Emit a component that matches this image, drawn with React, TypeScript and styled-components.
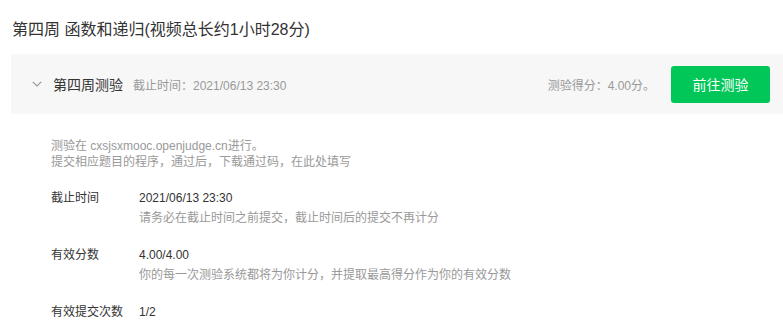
import React from "react";
import styled, { createGlobalStyle } from "styled-components";

const GlobalStyle = createGlobalStyle`
  html, body {
    margin: 0;
    padding: 0;
    background: #fff;
  }
  body {
    font-family: "Liberation Sans", Arial, "Noto Sans CJK SC", sans-serif;
    color: #333;
  }
`;

const rows = [
  {
    label: "截止时间",
    value: "2021/06/13 23:30",
    note: "请务必在截止时间之前提交，截止时间后的提交不再计分",
  },
  {
    label: "有效分数",
    value: "4.00/4.00",
    note: "你的每一次测验系统都将为你计分，并提取最高得分作为你的有效分数",
  },
  { label: "有效提交次数", value: "1/2" },
];

const Chevron = () => (
  <svg width="10" height="6" viewBox="0 0 10 6" fill="none">
    <path d="M0.8 0.8 L5 5 L9.2 0.8" stroke="#999" strokeWidth="1.2" />
  </svg>
);

export default function App() {
  return (
    <Page>
      <GlobalStyle />
      <ChapterTitle>第四周 函数和递归(视频总长约1小时28分)</ChapterTitle>
      <QuizBar>
        <Chevron />
        <QuizName>第四周测验</QuizName>
        <Deadline>截止时间：2021/06/13 23:30</Deadline>
        <Score>测验得分：4.00分。</Score>
        <GoButton type="button">前往测验</GoButton>
      </QuizBar>
      <Details>
        <Intro>
          <p>测验在 cxsjsxmooc.openjudge.cn进行。</p>
          <p>提交相应题目的程序，通过后，下载通过码，在此处填写</p>
        </Intro>
        {rows.map((row) => (
          <Row key={row.label}>
            <Label>{row.label}</Label>
            <ValueCol>
              <Value>{row.value}</Value>
              {row.note && <Note>{row.note}</Note>}
            </ValueCol>
          </Row>
        ))}
      </Details>
    </Page>
  );
}

const Page = styled.div`
  padding: 18px 0 0 11px;
`;
const ChapterTitle = styled.h2`
  margin: 0 0 12px 1px;
  font-size: 16px;
  font-weight: normal;
  line-height: 24px;
  color: #333;
`;
const QuizBar = styled.div`
  height: 60px;
  padding: 0 13px 0 21px;
  display: flex;
  align-items: center;
  background-color: #f7f7f7;
`;
const QuizName = styled.span`
  margin-left: 11px;
  font-size: 14px;
  color: #333;
`;
const Deadline = styled.span`
  margin-left: 10px;
  font-size: 12px;
  color: #999;
`;
const Score = styled.span`
  margin-left: auto;
  font-size: 12px;
  color: #999;
`;
const GoButton = styled.button`
  width: 99px;
  height: 37px;
  margin-left: 16px;
  border: none;
  border-radius: 3px;
  background-color: #00c758;
  color: #fff;
  font-family: inherit;
  font-size: 14px;
  cursor: pointer;
`;
const Details = styled.div`
  padding: 24px 0 0 40px;
`;
const Intro = styled.div`
  margin-bottom: 19px;
  font-size: 12px;
  line-height: 16px;
  color: #999;

  p {
    margin: 0;
  }
`;
const Row = styled.div`
  display: flex;
  margin-bottom: 19px;
  font-size: 12px;
  line-height: 18px;
`;
const Label = styled.div`
  width: 88px;
  flex-shrink: 0;
  color: #333;
`;
const ValueCol = styled.div`
  display: flex;
  flex-direction: column;
  gap: 2px;
`;
const Value = styled.div`
  color: #333;
`;
const Note = styled.div`
  color: #999;
`;
